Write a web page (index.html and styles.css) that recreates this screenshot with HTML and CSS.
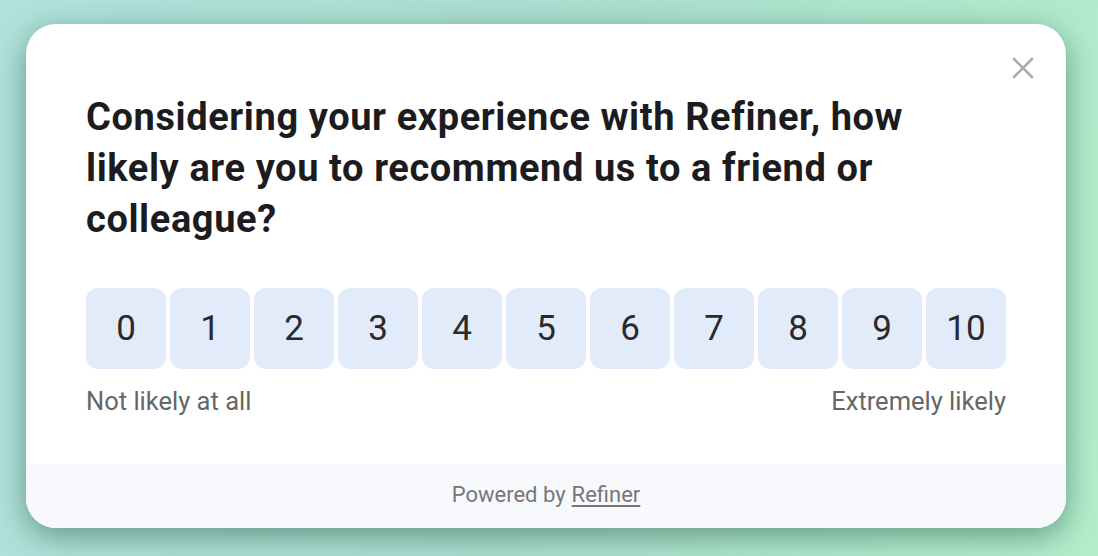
FILE: index.html
```html
<!DOCTYPE html>
<html>
<head>
<meta charset="utf-8">
<link rel="stylesheet" href="styles.css">
</head>
<body>
<div class="card">
  <button class="close" aria-label="Close">
    <svg width="22" height="22" viewBox="0 0 22 22"><path d="M2 2 L20 20 M20 2 L2 20" stroke="#aaaaaa" stroke-width="2.6" stroke-linecap="round" fill="none"/></svg>
  </button>
  <div class="body">
    <h1 class="question">Considering your experience with Refiner, how likely are you to recommend us to a friend or colleague?</h1>
    <div class="scale">
      <div class="opt">0</div><div class="opt">1</div><div class="opt">2</div><div class="opt">3</div><div class="opt">4</div><div class="opt">5</div><div class="opt">6</div><div class="opt">7</div><div class="opt">8</div><div class="opt">9</div><div class="opt">10</div>
    </div>
    <div class="labels"><span>Not likely at all</span><span>Extremely likely</span></div>
  </div>
  <div class="footer">Powered by <a href="#">Refiner</a></div>
</div>
</body>
</html>
```
FILE: styles.css
```css
html, body { margin: 0; padding: 0; }
body {
  width: 1098px; height: 556px; overflow: hidden;
  background: linear-gradient(100deg, #b1e2dc 0%, #acdfd0 50%, #b2eecb 100%);
  font-family: Roboto, "Liberation Sans", sans-serif;
  padding: 24px 0 0 26px;
  box-sizing: border-box;
}
.card {
  position: relative;
  width: 1040px; height: 504px;
  background: #fff;
  border-radius: 30px;
  overflow: hidden;
  display: flex; flex-direction: column;
  box-shadow: 0 8px 30px rgba(40, 90, 70, 0.55);
}
.close {
  position: absolute; top: 33px; right: 32px;
  width: 22px; height: 22px; padding: 0; border: 0; background: none;
  display: flex;
}
.body { flex: 1; padding: 68px 60px 0 60px; }
.question {
  margin: 0; max-width: 870px;
  font-size: 38px; line-height: 51px; font-weight: 700; color: #1c1c1e;
  letter-spacing: 0.6px;
}
.scale { display: flex; gap: 4px; margin-top: 43px; }
.opt {
  width: 80px; height: 81px; border-radius: 12px; background: #e1ebf9;
  display: flex; align-items: center; justify-content: center;
  font-size: 35px; color: #2a2a2d;
}
.labels {
  display: flex; justify-content: space-between;
  margin-top: 18px; font-size: 25.5px; line-height: 28px; color: #666;
}
.footer {
  height: 64px; background: #f8f9fd; padding-bottom: 4px; box-sizing: border-box;
  display: flex; align-items: center; justify-content: center;
  font-size: 22px; color: #777;
}
.footer a { color: #777; margin-left: 6px; text-decoration: underline; text-underline-offset: 3px; }
```
